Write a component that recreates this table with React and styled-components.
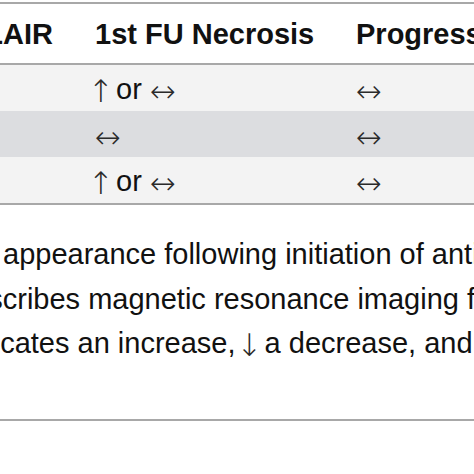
import React from "react";
import styled, { createGlobalStyle } from "styled-components";

const GlobalStyle = createGlobalStyle`
  html, body {
    margin: 0;
    padding: 0;
    background: #ffffff;
    overflow: hidden;
  }
  body {
    font-family: "Liberation Sans", Arial, Helvetica, sans-serif;
    color: #111111;
  }
`;

const COLS = "140px 261px 400px";

const Page = styled.div`
  width: 474px;
  height: 474px;
  overflow: hidden;
  background: #ffffff;
  padding-top: 2px;
  box-sizing: border-box;
`;

const Table = styled.div`
  margin-left: -45px;
  width: 801px;
  border-top: 2px solid #a8a8a8;
  border-bottom: 2px solid #a8a8a8;
`;

const HeaderRow = styled.div`
  display: grid;
  grid-template-columns: ${COLS};
  height: 61px;
  box-sizing: border-box;
  padding-top: 16px;
  background: #ffffff;
  border-bottom: 2px solid #a8a8a8;
`;

const HeadCell = styled.div`
  font-size: 29px;
  font-weight: 700;
  line-height: 1;
  white-space: nowrap;
  text-align: ${(p) => (p.$right ? "right" : "left")};
  padding-right: ${(p) => (p.$right ? "42px" : "0")};
  color: #111111;
`;

const BodyRow = styled.div`
  display: grid;
  grid-template-columns: ${COLS};
  height: 46px;
  box-sizing: border-box;
  padding-top: 10px;
  background: ${(p) => (p.$dark ? "#dcdde0" : "#f3f3f3")};
`;

const Cell = styled.div`
  font-size: 29px;
  line-height: 1;
  white-space: nowrap;
  color: #111111;
`;

const Arrow = styled.span`
  font-family: "DejaVu Sans", sans-serif;
  font-weight: 200;
  font-size: 31px;
  line-height: 1;
  color: #2a2a2a;
  vertical-align: -3px;
  letter-spacing: ${(p) => (p.$narrow ? "-13px" : "0")};
  margin-left: ${(p) => (p.$narrow ? "-7px" : "0")};
  margin-right: ${(p) => (p.$narrow ? "7px" : "0")};
`;

const Caption = styled.div`
  margin-top: 27px;
  font-size: 29px;
  line-height: 44.5px;
  color: #111111;
`;

const CaptionLine = styled.div`
  white-space: nowrap;
  margin-left: ${(p) => p.$shift}px;
`;

const Rule = styled.div`
  margin-top: 53px;
  height: 0;
  border-top: 2px solid #a8a8a8;
`;

const rows = [
  { dark: false, fu: ["↑", " or ", "↔"], prog: "↔" },
  { dark: true, fu: ["↔"], prog: "↔" },
  { dark: false, fu: ["↑", " or ", "↔"], prog: "↔" },
];

const isArrow = (s) => /[↑↓↔]/.test(s);
const isVertical = (s) => /[↑↓]/.test(s);

export default function App() {
  return (
    <>
      <GlobalStyle />
      <Page>
        <Table>
          <HeaderRow>
            <HeadCell $right>FLAIR</HeadCell>
            <HeadCell>1st FU Necrosis</HeadCell>
            <HeadCell>Progression</HeadCell>
          </HeaderRow>
          {rows.map((r, i) => (
            <BodyRow key={i} $dark={r.dark}>
              <Cell />
              <Cell>
                {r.fu.map((part, j) =>
                  isArrow(part) ? (
                    <Arrow key={j} $narrow={isVertical(part)}>
                      {part}
                    </Arrow>
                  ) : (
                    <span key={j}>{part}</span>
                  )
                )}
              </Cell>
              <Cell>
                <Arrow>{r.prog}</Arrow>
              </Cell>
            </BodyRow>
          ))}
        </Table>
        <Caption>
          <CaptionLine $shift={3}>appearance following initiation of antiangiogenic therapy.</CaptionLine>
          <CaptionLine $shift={-44}>describes magnetic resonance imaging findings at first follow-up.</CaptionLine>
          <CaptionLine $shift={-45}>
            indicates an increase, <Arrow $narrow>↓</Arrow> a decrease, and <Arrow>↔</Arrow> no change.
          </CaptionLine>
        </Caption>
        <Rule />
      </Page>
    </>
  );
}
